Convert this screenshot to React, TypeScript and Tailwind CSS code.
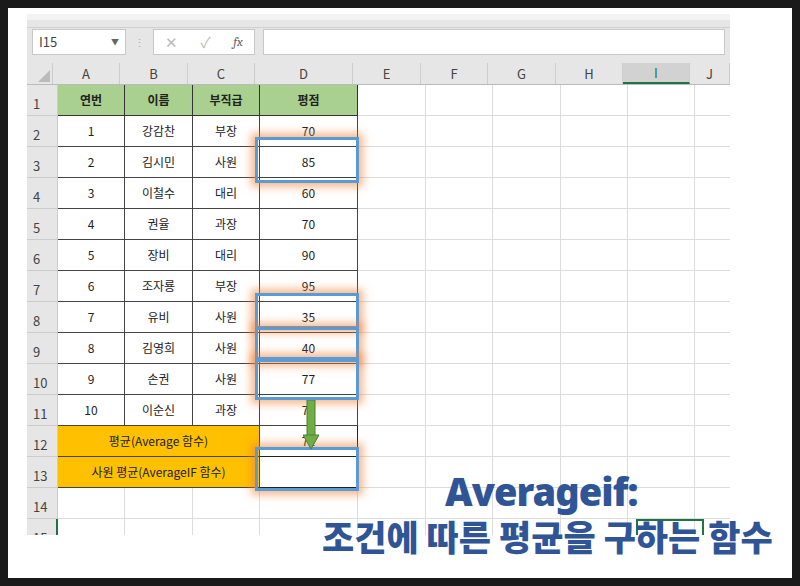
const cols = [
  { k: "A", w: 67 },
  { k: "B", w: 68 },
  { k: "C", w: 67 },
  { k: "D", w: 98 },
  { k: "E", w: 68 },
  { k: "F", w: 67 },
  { k: "G", w: 68 },
  { k: "H", w: 67 },
  { k: "I", w: 67 },
  { k: "J", w: 40 },
];

const data = [
  ["1", "강감찬", "부장", "70"],
  ["2", "김시민", "사원", "85"],
  ["3", "이철수", "대리", "60"],
  ["4", "권율", "과장", "70"],
  ["5", "장비", "대리", "90"],
  ["6", "조자룡", "부장", "95"],
  ["7", "유비", "사원", "35"],
  ["8", "김영희", "사원", "40"],
  ["9", "손권", "사원", "77"],
  ["10", "이순신", "과장", "78"],
];

const font = { fontFamily: '"Noto Sans CJK KR", "Noto Sans", sans-serif' };

function Highlight({ top, h = 46 }: { top: number; h?: number }) {
  return (
    <div
      className="absolute left-[228px] w-[104px] border-[3px] border-[#5b9bd5] shadow-[0_0_8px_4px_rgba(237,125,49,0.55)]"
      style={{ top, height: h }}
    />
  );
}

export default function App() {
  const row = 31;
  return (
    <div className="w-[800px] h-[586px] bg-[#1a1a1a] p-2" style={font}>
      <div className="relative w-full h-full bg-white overflow-hidden">
        <div className="absolute left-[19px] top-[6px] w-[703px] h-[521px] bg-white overflow-hidden text-[12px] text-[#222]">
          <div className="h-[6px] bg-[#f3f3f3]" />
          <div className="h-[8px] bg-[#e6e6e6] border-b border-[#d0d0d0]" />
          <div className="h-[28px] bg-[#e6e6e6] flex items-center gap-2 px-[5px]">
            <div className="w-[94px] h-[26px] bg-white border border-[#c8c8c8] flex items-center justify-between px-1.5 text-[13px] text-[#444]">
              <span>I15</span>
              <span className="text-[8px] text-[#666]">▼</span>
            </div>
            <span className="text-[#aaa] text-[11px]">⋮</span>
            <div className="w-[102px] h-[26px] bg-white border border-[#c8c8c8] flex items-center justify-around text-[#bbb] text-[15px]">
              <span>✕</span>
              <span>✓</span>
              <span className="italic font-serif text-[#666] text-[13px]">fx</span>
            </div>
            <div className="flex-1 h-[26px] bg-white border border-[#c8c8c8]" />
          </div>
          <div className="h-[7px] bg-[#e6e6e6]" />
          {/* column headers */}
          <div className="flex h-[22px] bg-[#e6e6e6] border-b border-[#bbb]">
            <div className="w-[31px] border-r border-[#ccc] flex items-end justify-end p-0.5">
              <div className="w-0 h-0 border-l-[12px] border-l-transparent border-b-[12px] border-b-[#bbb]" />
            </div>
            {cols.map((c) => (
              <div
                key={c.k}
                style={{ width: c.w }}
                className={`shrink-0 flex items-center justify-center border-r border-[#ccc] text-[13px] ${c.k === "I" ? "bg-[#d2d2d2] border-b-2 border-b-[#217346] text-[#217346]" : "text-[#444]"}`}
              >
                {c.k}
              </div>
            ))}
          </div>
          {/* rows */}
          {Array.from({ length: 15 }).map((_, i) => {
            const r = i + 1;
            return (
              <div key={r} className="flex" style={{ height: row }}>
                <div className={`w-[31px] shrink-0 bg-[#e6e6e6] border-b border-[#ccc] border-r border-[#bbb] flex items-end pl-1.5 pb-0.5 text-[13px] text-[#444] ${r === 15 ? "border-r-2 border-r-[#217346]" : ""}`}>
                  {r}
                </div>
                {cols.map((c, ci) => {
                  let txt = "";
                  let cls = "border-r border-b border-[#dcdcdc]";
                  if (r === 1 && ci < 4) {
                    txt = ["연번", "이름", "부직급", "평점"][ci];
                    cls = "bg-[#a9d08e] font-bold border-r border-b border-[#333]";
                  } else if (r >= 2 && r <= 11 && ci < 4) {
                    txt = data[r - 2][ci];
                    cls = "border-r border-b border-[#444]";
                  } else if ((r === 12 || r === 13) && ci < 3) {
                    if (ci > 0) return null;
                    return (
                      <div
                        key={c.k}
                        className="w-[202px] shrink-0 bg-[#ffc000] border-r border-b border-[#444] flex items-center justify-center text-[12px]"
                      >
                        {r === 12 ? "평균(Average 함수)" : "사원 평균(AverageIF 함수)"}
                      </div>
                    );
                  } else if ((r === 12 || r === 13) && ci === 3) {
                    txt = r === 12 ? "71" : "";
                    cls = "border-r border-b border-[#222]";
                  }
                  return (
                    <div
                      key={c.k}
                      style={{ width: c.w }}
                      className={`shrink-0 flex items-center justify-center text-[12px] ${cls}`}
                    >
                      {txt}
                    </div>
                  );
                })}
              </div>
            );
          })}
          {/* I15 selection */}
          <div className="absolute left-[609px] top-[505px] w-[68px] h-[31px] border-2 border-[#217346]" />
          <Highlight top={123} />
          <Highlight top={279} h={36} />
          <Highlight top={313} h={35} />
          <Highlight top={343} h={43} />
          <Highlight top={433} h={44} />
          {/* arrow */}
          <svg className="absolute left-[276px] top-[386px]" width="16" height="50" viewBox="0 0 16 50">
            <rect x="4" y="0" width="8" height="36" fill="#70ad47" stroke="#507e32" strokeWidth="1" />
            <polygon points="0,35 16,35 8,49" fill="#70ad47" stroke="#507e32" strokeWidth="1" />
          </svg>
        </div>
        <div className="absolute left-[437px] top-[464px] text-[38px] font-black text-[#2f5597] leading-none tracking-tight" style={{ fontFamily: '"Noto Sans", "Noto Sans CJK KR", sans-serif' }}>
          Averageif:
        </div>
        <div className="absolute left-[314px] top-[510px] text-[35px] font-black text-[#2f5597] leading-none whitespace-nowrap">
          조건에 따른 평균을 구하는 함수
        </div>
      </div>
    </div>
  );
}
